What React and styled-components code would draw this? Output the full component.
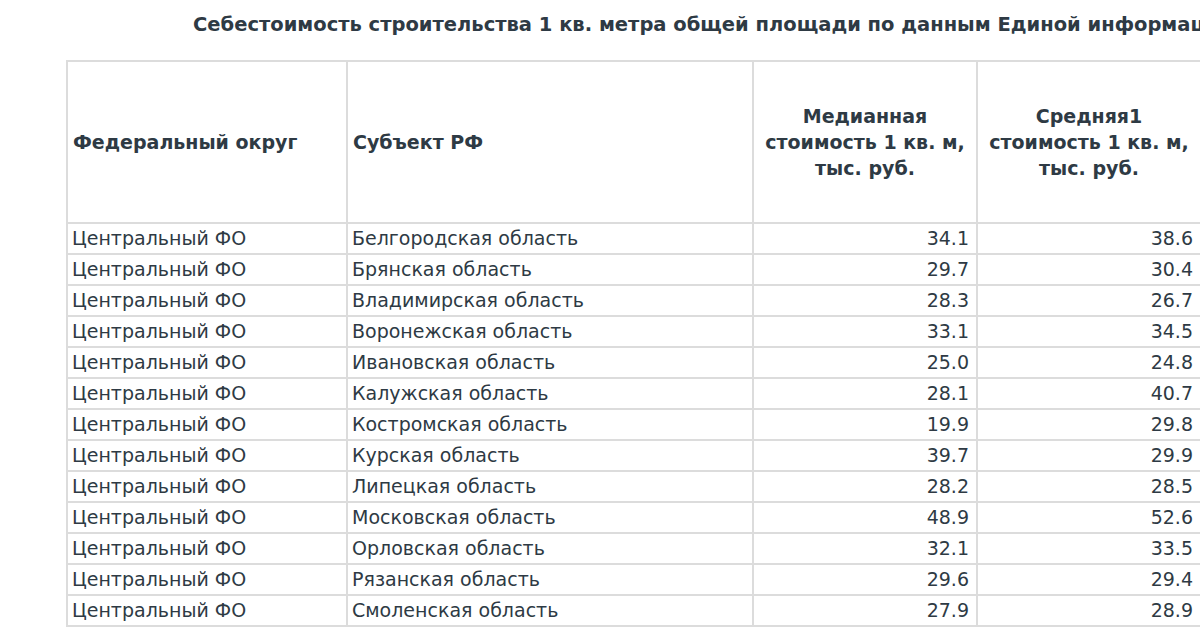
import React from "react"
import styled, { createGlobalStyle } from "styled-components"

const rows = [
  ["Белгородская область", "34.1", "38.6"],
  ["Брянская область", "29.7", "30.4"],
  ["Владимирская область", "28.3", "26.7"],
  ["Воронежская область", "33.1", "34.5"],
  ["Ивановская область", "25.0", "24.8"],
  ["Калужская область", "28.1", "40.7"],
  ["Костромская область", "19.9", "29.8"],
  ["Курская область", "39.7", "29.9"],
  ["Липецкая область", "28.2", "28.5"],
  ["Московская область", "48.9", "52.6"],
  ["Орловская область", "32.1", "33.5"],
  ["Рязанская область", "29.6", "29.4"],
  ["Смоленская область", "27.9", "28.9"],
]

export default function App() {
  return (
    <>
      <GlobalStyle />
      <Page>
        <Title>
          Себестоимость строительства 1 кв. метра общей площади по данным
          Единой информац
        </Title>
        <Table>
          <colgroup>
            <col style={{ width: 280 }} />
            <col style={{ width: 406 }} />
            <col style={{ width: 224 }} />
            <col style={{ width: 224 }} />
          </colgroup>
          <thead>
            <tr>
              <Th>Федеральный округ</Th>
              <Th>Субъект РФ</Th>
              <Th $center>Медианная стоимость 1 кв. м, тыс. руб.</Th>
              <Th $center>Средняя1 стоимость 1 кв. м, тыс. руб.</Th>
            </tr>
          </thead>
          <tbody>
            {rows.map(([region, median, mean]) => (
              <tr key={region}>
                <Td>Центральный ФО</Td>
                <Td>{region}</Td>
                <Td $num>{median}</Td>
                <Td $num>{mean}</Td>
              </tr>
            ))}
          </tbody>
        </Table>
      </Page>
    </>
  )
}

const GlobalStyle = createGlobalStyle`
  html, body {
    margin: 0;
    padding: 0;
    background: #fff;
    overflow: hidden;
  }
  body {
    font-family: "DejaVu Sans", Verdana, sans-serif;
    color: #2e3a44;
  }
`

const Page = styled.div`
  width: 1200px;
  height: 628px;
  overflow: hidden;
`

const Title = styled.h2`
  margin: 0;
  padding: 12px 0 0 193px;
  height: 60px;
  box-sizing: border-box;
  font-size: 19.5px;
  font-weight: bold;
  white-space: nowrap;
  overflow: hidden;
  line-height: 26px;
`

const Table = styled.table`
  margin-left: 66px;
  border-collapse: collapse;
  table-layout: fixed;
  width: 1134px;
`

const Th = styled.th`
  height: 160px;
  padding: 0 5px;
  border: 2px solid #dcdcdc;
  font-size: 19px;
  line-height: 26px;
  font-weight: bold;
  text-align: ${(p) => (p.$center ? "center" : "left")};
  vertical-align: middle;
`

const Td = styled.td`
  height: 29px;
  padding: 0 7px 0 4px;
  border: 2px solid #dcdcdc;
  font-size: 19px;
  line-height: 29px;
  white-space: nowrap;
  text-align: ${(p) => (p.$num ? "right" : "left")};
`
